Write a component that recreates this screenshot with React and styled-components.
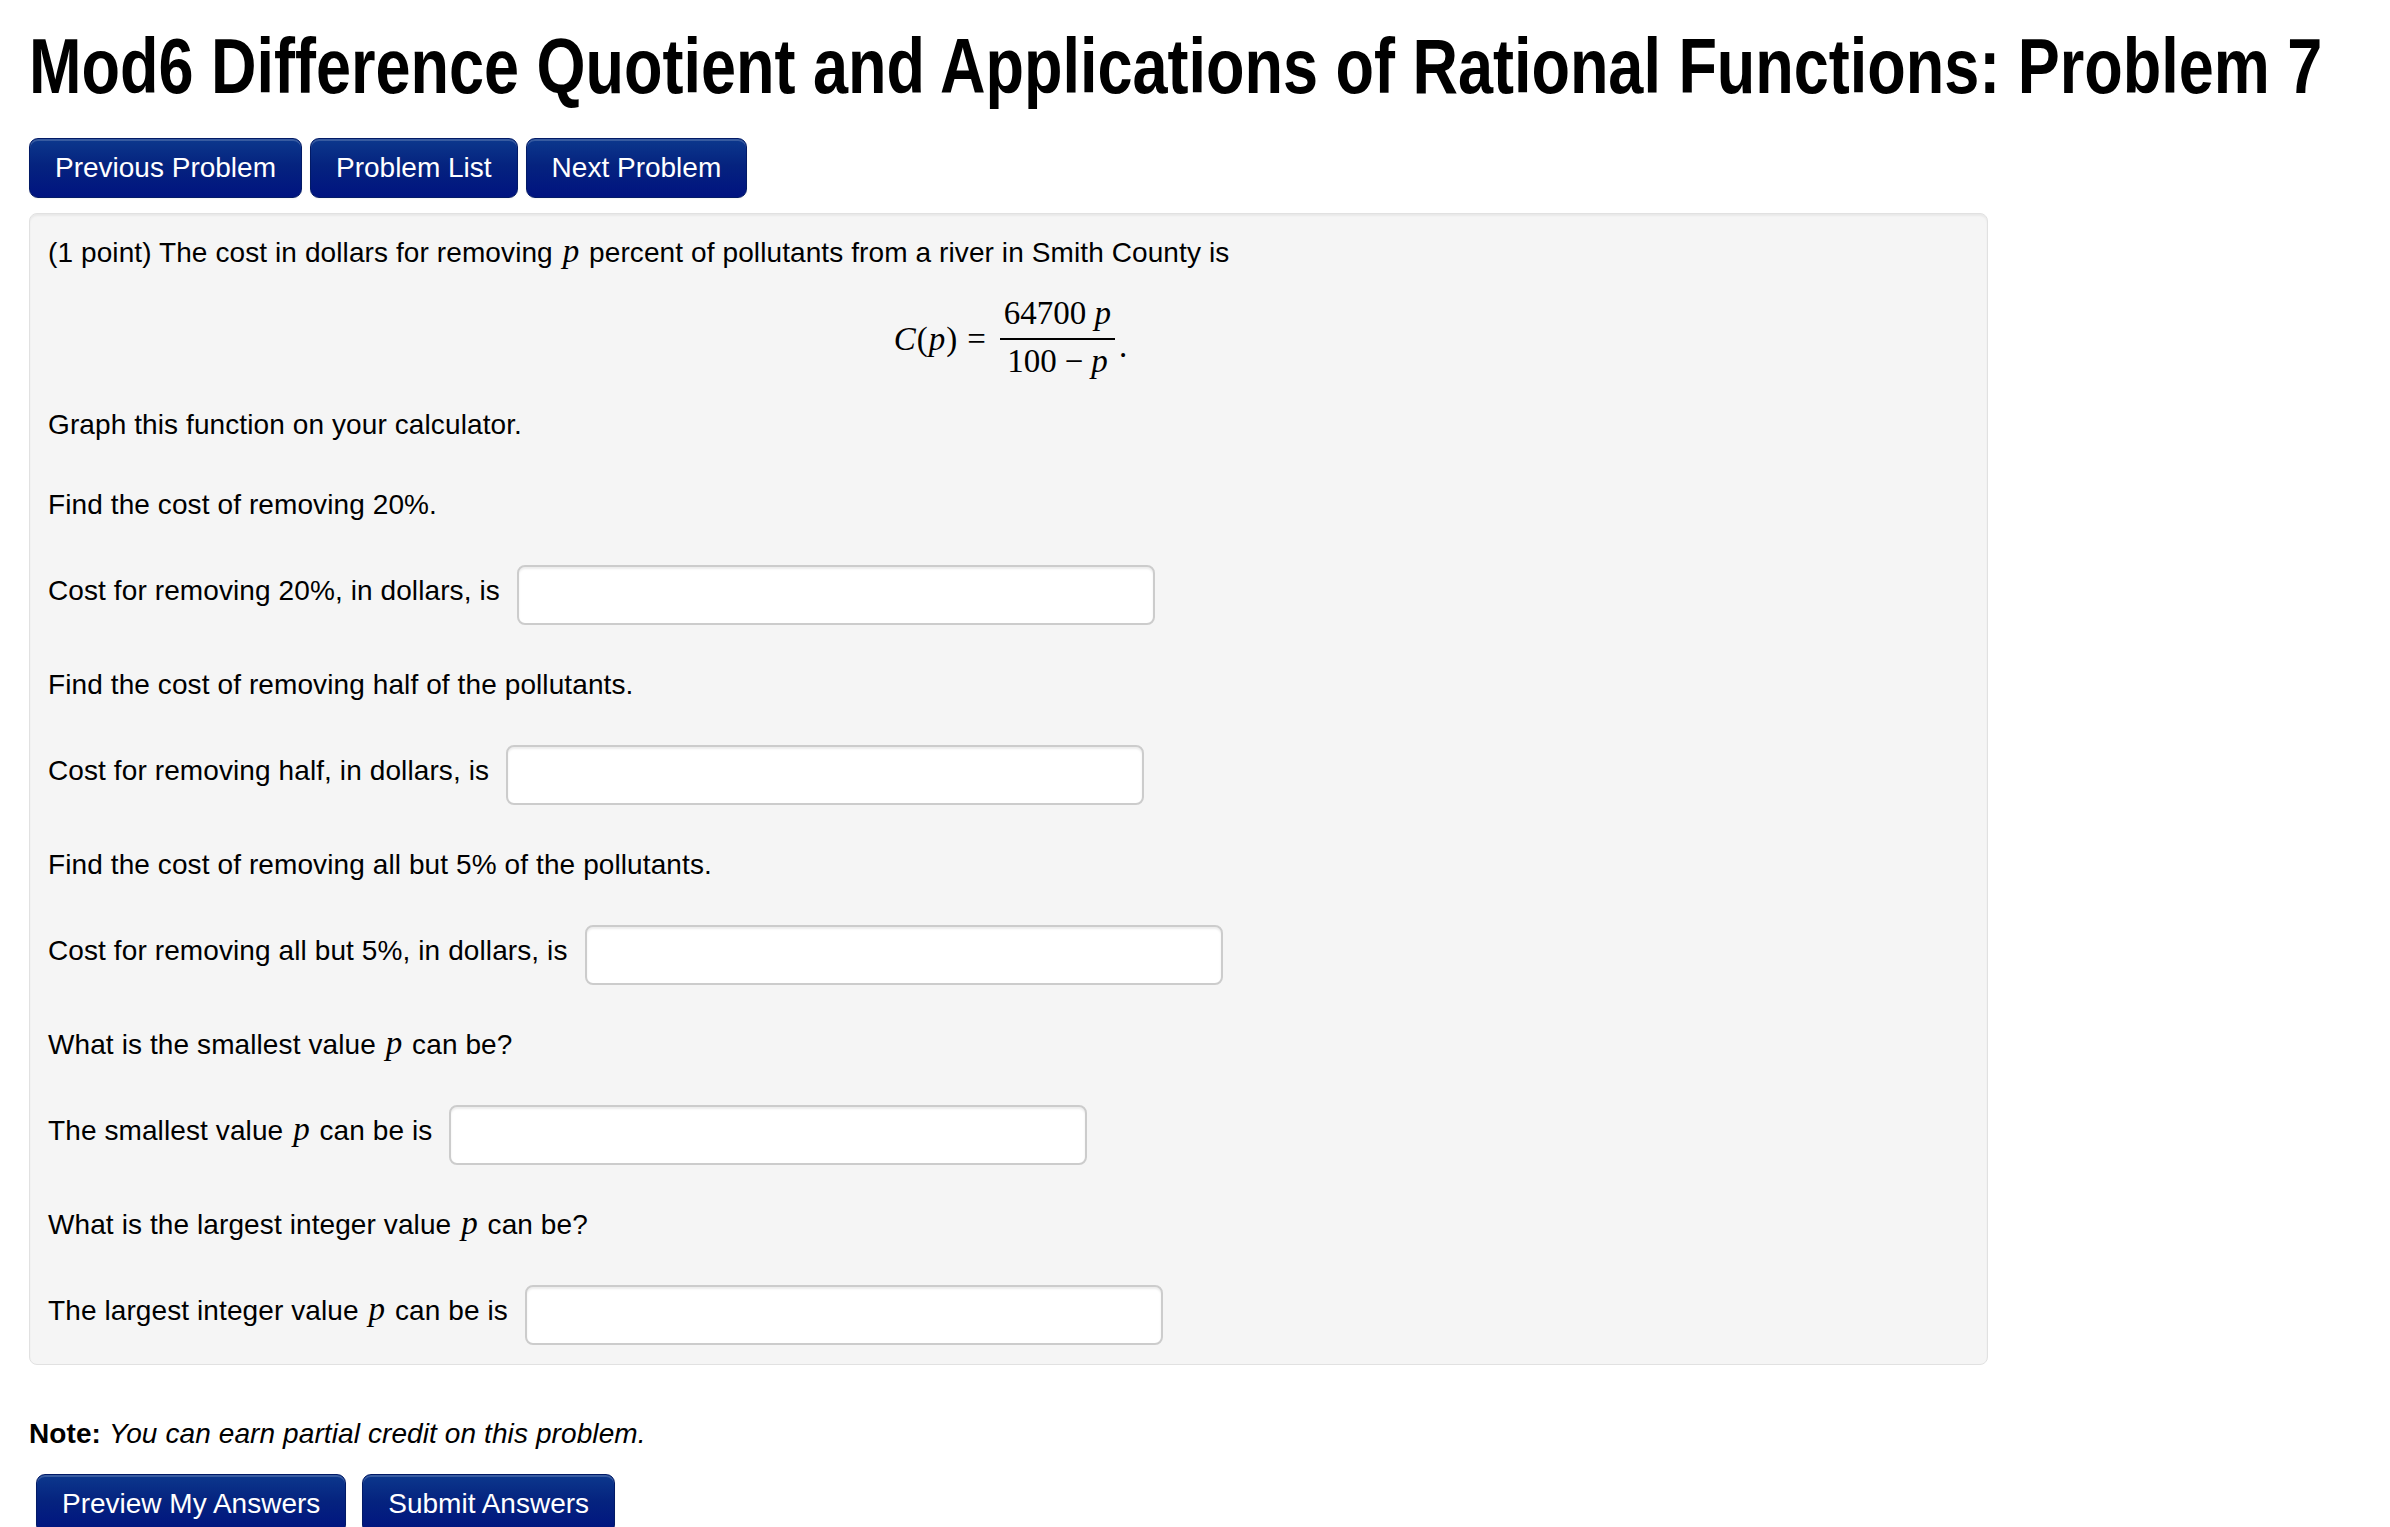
import React from "react";
import styled, { createGlobalStyle } from "styled-components";

const GlobalStyle = createGlobalStyle`
  html, body {
    margin: 0;
    padding: 0;
    background: #ffffff;
  }
  body {
    font-family: "Liberation Sans", Helvetica, Arial, sans-serif;
    font-size: 28px;
    line-height: 40px;
    letter-spacing: 0.1px;
    color: #000000;
  }
`;

const Page = styled.div`
  padding: 26px 0 40px 29px;
`;

const Title = styled.h1`
  margin: 0;
  font-size: 77px;
  line-height: 80px;
  font-weight: bold;
  letter-spacing: 0;
  color: #000;
  white-space: nowrap;
  transform: scaleX(0.818);
  transform-origin: left center;
`;

const ButtonBar = styled.div`
  display: flex;
  gap: ${(p) => p.$gap}px;
  margin: ${(p) => p.$margin};
`;

const BlueButton = styled.button`
  height: 60px;
  box-sizing: border-box;
  padding: 0 25px;
  display: inline-flex;
  align-items: center;
  font-family: "Liberation Sans", Helvetica, Arial, sans-serif;
  font-size: 28px;
  line-height: 40px;
  letter-spacing: 0;
  color: #ffffff;
  background: linear-gradient(to bottom, #0c388d 0%, #05237f 45%, #001380 100%);
  border: 1px solid #021a66;
  border-radius: 9px;
  box-shadow: inset 0 2px 0 rgba(255, 255, 255, 0.18), 0 1px 2px rgba(0, 0, 0, 0.05);
  cursor: pointer;
`;

const Panel = styled.div`
  margin-top: 15px;
  width: 1959px;
  box-sizing: border-box;
  padding: 19px 18px;
  background: #f5f5f5;
  border: 1px solid #e1e1e1;
  border-radius: 8px;
  box-shadow: inset 0 2px 2px rgba(0, 0, 0, 0.05);
  display: flex;
  flex-direction: column;
  gap: 40px;
`;

const Para = styled.div`
  margin: 0;
`;

const MathVar = styled.span`
  font-family: "Liberation Serif", "Times New Roman", serif;
  font-style: italic;
  font-size: 33px;
  line-height: 0;
  letter-spacing: 0;
  padding: 0 2px;
`;

const Formula = styled.div`
  display: flex;
  justify-content: center;
  align-items: center;
  margin: -16px 0 -16px;
  font-family: "Liberation Serif", "Times New Roman", serif;
  font-size: 33px;
  line-height: 32px;
  letter-spacing: 0;
`;

const MathLeft = styled.span`
  white-space: pre;
  padding-left: 4px;
`;

const Paren = styled.span`
  padding: 0 1px;
`;

const Equals = styled.span`
  margin: 0 14px 0 9px;
`;

const Italic = styled.i`
  font-style: italic;
`;

const Fraction = styled.span`
  display: inline-flex;
  flex-direction: column;
  align-items: center;
`;

const Numer = styled.span`
  padding: 0 4px 9px;
  border-bottom: 2px solid #000;
  white-space: pre;
`;

const Denom = styled.span`
  padding: 5px 4px 4px;
  white-space: pre;
`;

const Minus = styled.span`
  margin: 0 8px;
`;

const Period = styled.span`
  margin-left: 4px;
  align-self: center;
  padding-top: 14px;
`;

const AnswerRow = styled.div`
  display: flex;
  align-items: flex-start;
  gap: 17px;
`;

const RowLabel = styled.span`
  padding-top: 6px;
`;

const AnswerInput = styled.input`
  width: 638px;
  height: 60px;
  box-sizing: border-box;
  margin: 0;
  padding: 8px 12px;
  border: 2px solid #cccccc;
  border-radius: 8px;
  background: #ffffff;
  box-shadow: inset 0 2px 2px rgba(0, 0, 0, 0.075);
  font-family: "Liberation Sans", Helvetica, Arial, sans-serif;
  font-size: 28px;
  outline: none;
`;

const Note = styled.div`
  margin-top: 49px;
`;

const NoteText = styled.em`
  font-style: italic;
`;

const P = () => <MathVar>p</MathVar>;

const rows = [
  { q: <>Find the cost of removing 20%.</>, label: <>Cost for removing 20%, in dollars, is</> },
  { q: <>Find the cost of removing half of the pollutants.</>, label: <>Cost for removing half, in dollars, is</> },
  { q: <>Find the cost of removing all but 5% of the pollutants.</>, label: <>Cost for removing all but 5%, in dollars, is</> },
  { q: <>What is the smallest value <P /> can be?</>, label: <>The smallest value <P /> can be is</> },
  { q: <>What is the largest integer value <P /> can be?</>, label: <>The largest integer value <P /> can be is</> },
];

export default function App() {
  return (
    <>
      <GlobalStyle />
      <Page>
        <Title>Mod6 Difference Quotient and Applications of Rational Functions: Problem 7</Title>
        <ButtonBar $gap={8} $margin="32px 0 0 0">
          <BlueButton>Previous Problem</BlueButton>
          <BlueButton>Problem List</BlueButton>
          <BlueButton>Next Problem</BlueButton>
        </ButtonBar>
        <Panel>
          <Para>
            (1 point) The cost in dollars for removing <P /> percent of pollutants from a river in Smith County is
          </Para>
          <Formula>
            <MathLeft>
              <Italic>C</Italic>
              <Paren>(</Paren>
              <Italic>p</Italic>
              <Paren>)</Paren>
              <Equals>=</Equals>
            </MathLeft>
            <Fraction>
              <Numer>
                64700<Italic> p</Italic>
              </Numer>
              <Denom>
                100<Minus>−</Minus>
                <Italic>p</Italic>
              </Denom>
            </Fraction>
            <Period>.</Period>
          </Formula>
          <Para>Graph this function on your calculator.</Para>
          {rows.map((r, i) => (
            <React.Fragment key={i}>
              <Para>{r.q}</Para>
              <AnswerRow>
                <RowLabel>{r.label}</RowLabel>
                <AnswerInput type="text" aria-label={`answer ${i + 1}`} />
              </AnswerRow>
            </React.Fragment>
          ))}
        </Panel>
        <Note>
          <b>Note:</b> <NoteText>You can earn partial credit on this problem.</NoteText>
        </Note>
        <ButtonBar $gap={16} $margin="20px 0 0 7px">
          <BlueButton>Preview My Answers</BlueButton>
          <BlueButton>Submit Answers</BlueButton>
        </ButtonBar>
      </Page>
    </>
  );
}
